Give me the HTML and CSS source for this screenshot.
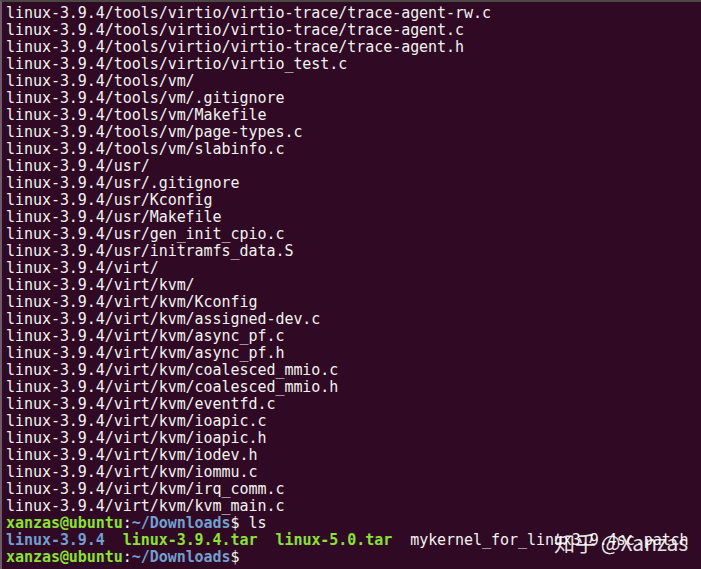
FILE: index.html
```html
<!DOCTYPE html>
<html>
<head>
<meta charset="utf-8">
<link rel="stylesheet" href="styles.css">
</head>
<body>
<div class="term">
<div class="out">linux-3.9.4/tools/virtio/virtio-trace/trace-agent-rw.c
linux-3.9.4/tools/virtio/virtio-trace/trace-agent.c
linux-3.9.4/tools/virtio/virtio-trace/trace-agent.h
linux-3.9.4/tools/virtio/virtio_test.c
linux-3.9.4/tools/vm/
linux-3.9.4/tools/vm/.gitignore
linux-3.9.4/tools/vm/Makefile
linux-3.9.4/tools/vm/page-types.c
linux-3.9.4/tools/vm/slabinfo.c
linux-3.9.4/usr/
linux-3.9.4/usr/.gitignore
linux-3.9.4/usr/Kconfig
linux-3.9.4/usr/Makefile
linux-3.9.4/usr/gen_init_cpio.c
linux-3.9.4/usr/initramfs_data.S
linux-3.9.4/virt/
linux-3.9.4/virt/kvm/
linux-3.9.4/virt/kvm/Kconfig
linux-3.9.4/virt/kvm/assigned-dev.c
linux-3.9.4/virt/kvm/async_pf.c
linux-3.9.4/virt/kvm/async_pf.h
linux-3.9.4/virt/kvm/coalesced_mmio.c
linux-3.9.4/virt/kvm/coalesced_mmio.h
linux-3.9.4/virt/kvm/eventfd.c
linux-3.9.4/virt/kvm/ioapic.c
linux-3.9.4/virt/kvm/ioapic.h
linux-3.9.4/virt/kvm/iodev.h
linux-3.9.4/virt/kvm/iommu.c
linux-3.9.4/virt/kvm/irq_comm.c
linux-3.9.4/virt/kvm/kvm_main.c
<span class="user">xanzas@ubuntu</span>:<span class="path">~/Downloads</span>$ ls
<span class="dir">linux-3.9.4</span>  <span class="arc">linux-3.9.4.tar</span>  <span class="arc">linux-5.0.tar</span>  mykernel_for_linux3.9.4sc.patch
<span class="user">xanzas@ubuntu</span>:<span class="path">~/Downloads</span>$</div>
<div class="watermark">知乎 @Xanzas</div>
</div>
</body>
</html>
```
FILE: styles.css
```css
html, body {
  margin: 0;
  padding: 0;
  background: #300a24;
}
.term {
  position: relative;
  width: 701px;
  height: 569px;
  box-sizing: border-box;
  border-top: 2px solid #4a4843;
  border-left: 2px solid #6e5a68;
  background: #300a24;
  padding: 3px 0 0 4px;
  overflow: hidden;
}
.out {
  margin: 0;
  white-space: pre;
  font-family: "DejaVu Sans Mono", monospace;
  font-size: 15px;
  letter-spacing: -0.05px;
  line-height: 17px;
  color: #f2f2f0;
}
.user {
  color: #8ae234;
  font-weight: bold;
}
.path {
  color: #729fcf;
  font-weight: bold;
}
.dir {
  color: #729fcf;
  font-weight: bold;
}
.arc {
  color: #8ae234;
  font-weight: bold;
}
.watermark {
  position: absolute;
  left: 552px;
  top: 527px;
  font-family: "Noto Sans CJK SC", "Noto Sans", sans-serif;
  font-size: 21px;
  line-height: 26px;
  color: rgba(255, 255, 255, 0.9);
}
```
